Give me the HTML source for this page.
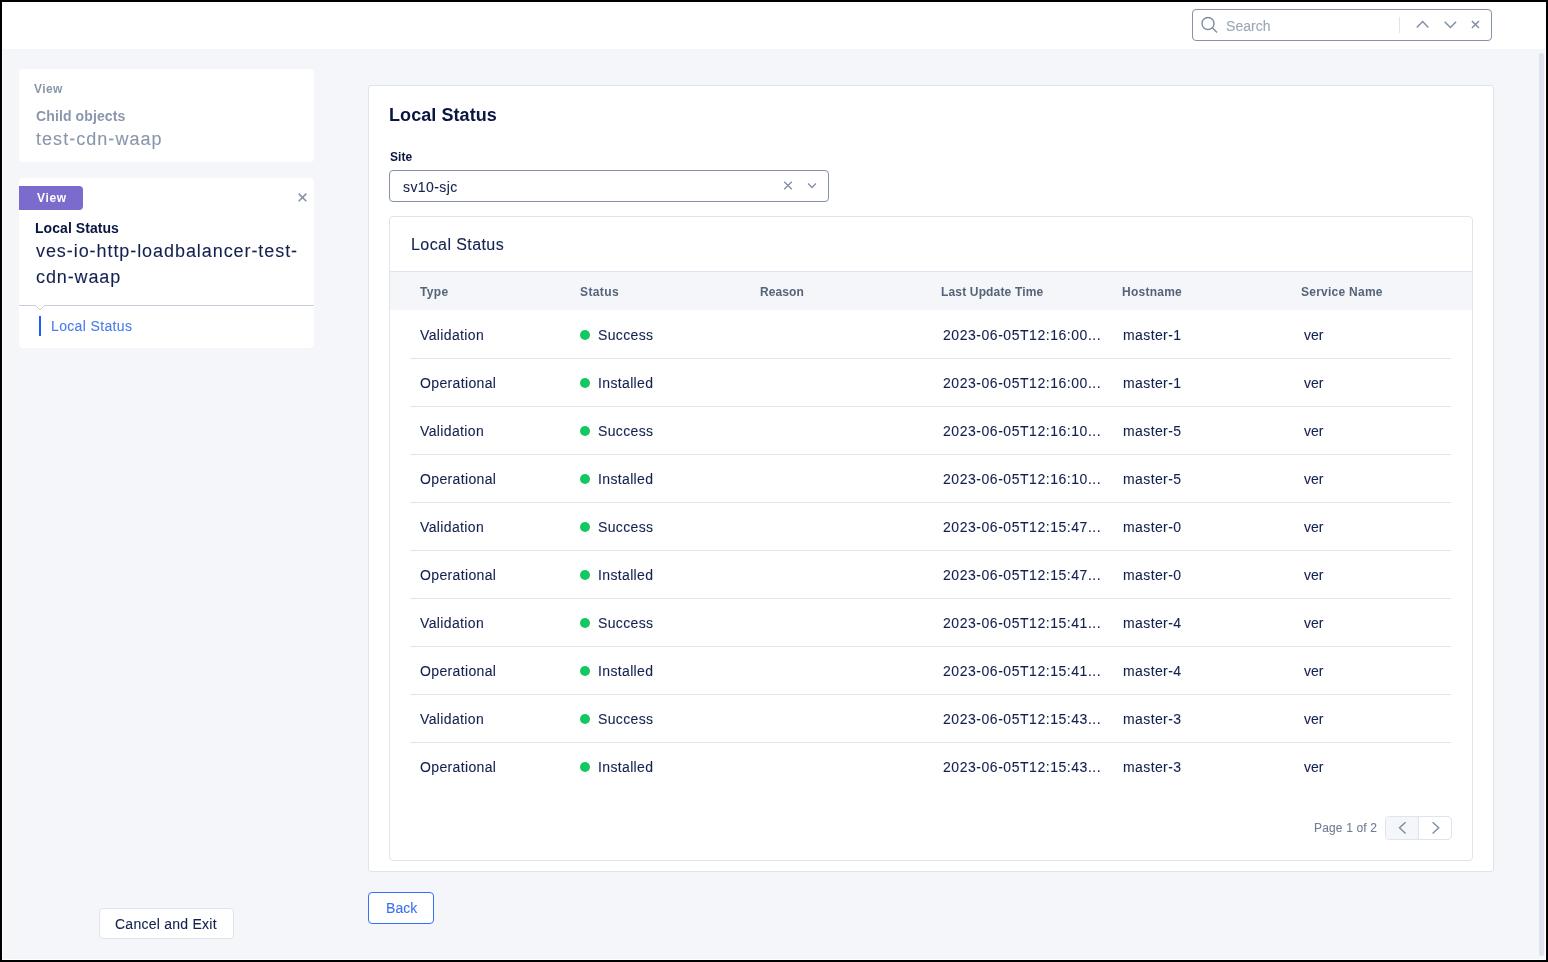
<!DOCTYPE html>
<html><head><meta charset="utf-8">
<style>
html,body{margin:0;padding:0;}
body{width:1548px;height:962px;background:#000;position:relative;overflow:hidden;font-family:"Liberation Sans",sans-serif;}
.win{position:absolute;left:2px;top:2px;width:1544px;height:958px;background:#fff;overflow:hidden;}
.t{position:absolute;line-height:1;white-space:pre;will-change:transform;-webkit-text-stroke:0.1px currentColor;}
.t.b{-webkit-text-stroke:0;}
.abs{position:absolute;box-sizing:border-box;}
svg{position:absolute;overflow:visible;}
</style></head><body>
<div class="win"></div>
<div class="abs" style="left:3px;top:49px;width:1542px;height:910px;background:#f4f6f9;"></div>
<div class="abs" style="left:1539px;top:53px;width:5px;height:903px;background:#dde2ee;border-radius:3px;"></div>
<div class="abs" style="left:1192px;top:9px;width:300px;height:32px;border:1px solid #8592a8;border-radius:4px;background:#fff;"></div>
<svg style="left:0;top:0" width="1548" height="60"><g fill="none" stroke="#7f8ca3" stroke-width="1.4"><circle cx="1208" cy="23.5" r="6"/><path d="M1212.3 27.8 L1217 32.5"/><path d="M1416.8 27.6 L1422.6 21.6 L1428.4 27.6"/><path d="M1444.7 21.8 L1450.4 27.6 L1456.1 21.8"/><path d="M1471.9 21 L1479 28.1 M1479 21 L1471.9 28.1"/></g><rect x="1399" y="17" width="1" height="16" fill="#dfe4ec"/></svg>
<div class="t" style="left:1226.0px;top:18.95px;font-size:14px;color:#9ba6b8;letter-spacing:0.05px;">Search</div>
<div class="abs" style="left:19px;top:69px;width:295px;height:93px;background:#fff;border-radius:4px;"></div>
<div class="t b" style="left:34.0px;top:82.94px;font-size:12px;color:#8996ab;font-weight:bold;letter-spacing:0.42px;">View</div>
<div class="t b" style="left:35.7px;top:109.15px;font-size:14px;color:#8996ab;font-weight:bold;letter-spacing:0.12px;">Child objects</div>
<div class="t" style="left:35.7px;top:129.56px;font-size:18px;color:#8996ab;letter-spacing:1.04px;">test-cdn-waap</div>
<div class="abs" style="left:19px;top:178px;width:295px;height:170px;background:#fff;border-radius:4px;"></div>
<div class="abs" style="left:19px;top:186px;width:64px;height:24px;background:#7b6bcd;border-radius:0 4px 4px 0;"></div>
<div class="t b" style="left:36.7px;top:191.84px;font-size:12px;color:#fff;font-weight:bold;letter-spacing:0.69px;">View</div>
<svg style="left:0;top:0" width="400" height="400"><g fill="none" stroke="#8390a6" stroke-width="1.5"><path d="M298.7 193.6 L306.3 201.2 M306.3 193.6 L298.7 201.2"/></g><path d="M19 305.5 L35.5 305.5 L40 310 L44.5 305.5 L314 305.5" fill="#fff" stroke="#c7cfdd" stroke-width="1"/><rect x="39" y="316" width="2" height="20" fill="#1f5bf5"/></svg>
<div class="t b" style="left:35.3px;top:221.45px;font-size:14px;color:#0a1642;font-weight:bold;letter-spacing:0.06px;">Local Status</div>
<div class="t" style="left:36.0px;top:241.96px;font-size:18px;color:#13214f;letter-spacing:0.93px;">ves-io-http-loadbalancer-test-</div>
<div class="t" style="left:36.0px;top:267.66px;font-size:18px;color:#13214f;letter-spacing:0.89px;">cdn-waap</div>
<div class="t" style="left:51.3px;top:319.15px;font-size:14px;color:#4b7bec;letter-spacing:0.35px;">Local Status</div>
<div class="abs" style="left:368px;top:85px;width:1126px;height:787px;background:#fff;border:1px solid #dde3ef;border-radius:3px;"></div>
<div class="t b" style="left:389.3px;top:105.56px;font-size:18px;color:#0a1642;font-weight:bold;letter-spacing:0.07px;">Local Status</div>
<div class="t b" style="left:389.5px;top:150.94px;font-size:12px;color:#0a1642;font-weight:bold;letter-spacing:0.06px;">Site</div>
<div class="abs" style="left:389px;top:170px;width:440px;height:32px;border:1px solid #8592a8;border-radius:4px;background:#fff;"></div>
<div class="t" style="left:402.6px;top:180.15px;font-size:14px;color:#13214f;letter-spacing:0.41px;">sv10-sjc</div>
<svg style="left:0;top:0" width="900" height="220"><g fill="none" stroke="#8390a6" stroke-width="1.4"><path d="M784.2 181.7 L791.8 189.3 M791.8 181.7 L784.2 189.3"/><path d="M808 183.5 L812 187.5 L816 183.5"/></g></svg>
<div class="abs" style="left:389px;top:216px;width:1084px;height:645px;background:#fff;border:1px solid #dde3ef;border-radius:4px;overflow:hidden;"><div class="abs" style="left:0;top:54px;width:1082px;height:39px;background:#f4f6f9;border-top:1px solid #dde3ef;"></div></div>
<div class="t" style="left:410.5px;top:237.26px;font-size:16px;color:#13214f;letter-spacing:0.42px;">Local Status</div>
<div class="t b" style="left:419.8px;top:286.14px;font-size:12px;color:#566479;font-weight:bold;letter-spacing:0.35px;">Type</div>
<div class="t b" style="left:579.8px;top:286.14px;font-size:12px;color:#566479;font-weight:bold;letter-spacing:0.40px;">Status</div>
<div class="t b" style="left:760.0px;top:286.14px;font-size:12px;color:#566479;font-weight:bold;letter-spacing:0.10px;">Reason</div>
<div class="t b" style="left:941.4px;top:286.14px;font-size:12px;color:#566479;font-weight:bold;letter-spacing:0.16px;">Last Update Time</div>
<div class="t b" style="left:1121.6px;top:286.14px;font-size:12px;color:#566479;font-weight:bold;letter-spacing:0.25px;">Hostname</div>
<div class="t b" style="left:1301.0px;top:286.14px;font-size:12px;color:#566479;font-weight:bold;letter-spacing:0.25px;">Service Name</div>
<div class="t" style="left:419.8px;top:328.15px;font-size:14px;color:#13214f;letter-spacing:0.36px;">Validation</div>
<div class="t" style="left:597.7px;top:328.15px;font-size:14px;color:#13214f;letter-spacing:0.36px;">Success</div>
<div class="t" style="left:943.0px;top:328.15px;font-size:14px;color:#13214f;letter-spacing:0.54px;">2023-06-05T12:16:00...</div>
<div class="t" style="left:1122.7px;top:328.15px;font-size:14px;color:#13214f;letter-spacing:0.40px;">master-1</div>
<div class="t" style="left:1304.2px;top:328.15px;font-size:14px;color:#13214f;letter-spacing:0.02px;">ver</div>
<div class="t" style="left:419.8px;top:376.15px;font-size:14px;color:#13214f;letter-spacing:0.36px;">Operational</div>
<div class="t" style="left:597.7px;top:376.15px;font-size:14px;color:#13214f;letter-spacing:0.36px;">Installed</div>
<div class="t" style="left:943.0px;top:376.15px;font-size:14px;color:#13214f;letter-spacing:0.54px;">2023-06-05T12:16:00...</div>
<div class="t" style="left:1122.7px;top:376.15px;font-size:14px;color:#13214f;letter-spacing:0.40px;">master-1</div>
<div class="t" style="left:1304.2px;top:376.15px;font-size:14px;color:#13214f;letter-spacing:0.02px;">ver</div>
<div class="t" style="left:419.8px;top:424.15px;font-size:14px;color:#13214f;letter-spacing:0.36px;">Validation</div>
<div class="t" style="left:597.7px;top:424.15px;font-size:14px;color:#13214f;letter-spacing:0.36px;">Success</div>
<div class="t" style="left:943.0px;top:424.15px;font-size:14px;color:#13214f;letter-spacing:0.54px;">2023-06-05T12:16:10...</div>
<div class="t" style="left:1122.7px;top:424.15px;font-size:14px;color:#13214f;letter-spacing:0.40px;">master-5</div>
<div class="t" style="left:1304.2px;top:424.15px;font-size:14px;color:#13214f;letter-spacing:0.02px;">ver</div>
<div class="t" style="left:419.8px;top:472.15px;font-size:14px;color:#13214f;letter-spacing:0.36px;">Operational</div>
<div class="t" style="left:597.7px;top:472.15px;font-size:14px;color:#13214f;letter-spacing:0.36px;">Installed</div>
<div class="t" style="left:943.0px;top:472.15px;font-size:14px;color:#13214f;letter-spacing:0.54px;">2023-06-05T12:16:10...</div>
<div class="t" style="left:1122.7px;top:472.15px;font-size:14px;color:#13214f;letter-spacing:0.40px;">master-5</div>
<div class="t" style="left:1304.2px;top:472.15px;font-size:14px;color:#13214f;letter-spacing:0.02px;">ver</div>
<div class="t" style="left:419.8px;top:520.15px;font-size:14px;color:#13214f;letter-spacing:0.36px;">Validation</div>
<div class="t" style="left:597.7px;top:520.15px;font-size:14px;color:#13214f;letter-spacing:0.36px;">Success</div>
<div class="t" style="left:943.0px;top:520.15px;font-size:14px;color:#13214f;letter-spacing:0.54px;">2023-06-05T12:15:47...</div>
<div class="t" style="left:1122.7px;top:520.15px;font-size:14px;color:#13214f;letter-spacing:0.40px;">master-0</div>
<div class="t" style="left:1304.2px;top:520.15px;font-size:14px;color:#13214f;letter-spacing:0.02px;">ver</div>
<div class="t" style="left:419.8px;top:568.15px;font-size:14px;color:#13214f;letter-spacing:0.36px;">Operational</div>
<div class="t" style="left:597.7px;top:568.15px;font-size:14px;color:#13214f;letter-spacing:0.36px;">Installed</div>
<div class="t" style="left:943.0px;top:568.15px;font-size:14px;color:#13214f;letter-spacing:0.54px;">2023-06-05T12:15:47...</div>
<div class="t" style="left:1122.7px;top:568.15px;font-size:14px;color:#13214f;letter-spacing:0.40px;">master-0</div>
<div class="t" style="left:1304.2px;top:568.15px;font-size:14px;color:#13214f;letter-spacing:0.02px;">ver</div>
<div class="t" style="left:419.8px;top:616.15px;font-size:14px;color:#13214f;letter-spacing:0.36px;">Validation</div>
<div class="t" style="left:597.7px;top:616.15px;font-size:14px;color:#13214f;letter-spacing:0.36px;">Success</div>
<div class="t" style="left:943.0px;top:616.15px;font-size:14px;color:#13214f;letter-spacing:0.54px;">2023-06-05T12:15:41...</div>
<div class="t" style="left:1122.7px;top:616.15px;font-size:14px;color:#13214f;letter-spacing:0.40px;">master-4</div>
<div class="t" style="left:1304.2px;top:616.15px;font-size:14px;color:#13214f;letter-spacing:0.02px;">ver</div>
<div class="t" style="left:419.8px;top:664.15px;font-size:14px;color:#13214f;letter-spacing:0.36px;">Operational</div>
<div class="t" style="left:597.7px;top:664.15px;font-size:14px;color:#13214f;letter-spacing:0.36px;">Installed</div>
<div class="t" style="left:943.0px;top:664.15px;font-size:14px;color:#13214f;letter-spacing:0.54px;">2023-06-05T12:15:41...</div>
<div class="t" style="left:1122.7px;top:664.15px;font-size:14px;color:#13214f;letter-spacing:0.40px;">master-4</div>
<div class="t" style="left:1304.2px;top:664.15px;font-size:14px;color:#13214f;letter-spacing:0.02px;">ver</div>
<div class="t" style="left:419.8px;top:712.15px;font-size:14px;color:#13214f;letter-spacing:0.36px;">Validation</div>
<div class="t" style="left:597.7px;top:712.15px;font-size:14px;color:#13214f;letter-spacing:0.36px;">Success</div>
<div class="t" style="left:943.0px;top:712.15px;font-size:14px;color:#13214f;letter-spacing:0.54px;">2023-06-05T12:15:43...</div>
<div class="t" style="left:1122.7px;top:712.15px;font-size:14px;color:#13214f;letter-spacing:0.40px;">master-3</div>
<div class="t" style="left:1304.2px;top:712.15px;font-size:14px;color:#13214f;letter-spacing:0.02px;">ver</div>
<div class="t" style="left:419.8px;top:760.15px;font-size:14px;color:#13214f;letter-spacing:0.36px;">Operational</div>
<div class="t" style="left:597.7px;top:760.15px;font-size:14px;color:#13214f;letter-spacing:0.36px;">Installed</div>
<div class="t" style="left:943.0px;top:760.15px;font-size:14px;color:#13214f;letter-spacing:0.54px;">2023-06-05T12:15:43...</div>
<div class="t" style="left:1122.7px;top:760.15px;font-size:14px;color:#13214f;letter-spacing:0.40px;">master-3</div>
<div class="t" style="left:1304.2px;top:760.15px;font-size:14px;color:#13214f;letter-spacing:0.02px;">ver</div>
<svg style="left:0;top:0" width="1548" height="962"><circle cx="585" cy="335" r="5" fill="#12c862"/><rect x="410" y="358" width="1041" height="1" fill="#dde3ef"/><circle cx="585" cy="383" r="5" fill="#12c862"/><rect x="410" y="406" width="1041" height="1" fill="#dde3ef"/><circle cx="585" cy="431" r="5" fill="#12c862"/><rect x="410" y="454" width="1041" height="1" fill="#dde3ef"/><circle cx="585" cy="479" r="5" fill="#12c862"/><rect x="410" y="502" width="1041" height="1" fill="#dde3ef"/><circle cx="585" cy="527" r="5" fill="#12c862"/><rect x="410" y="550" width="1041" height="1" fill="#dde3ef"/><circle cx="585" cy="575" r="5" fill="#12c862"/><rect x="410" y="598" width="1041" height="1" fill="#dde3ef"/><circle cx="585" cy="623" r="5" fill="#12c862"/><rect x="410" y="646" width="1041" height="1" fill="#dde3ef"/><circle cx="585" cy="671" r="5" fill="#12c862"/><rect x="410" y="694" width="1041" height="1" fill="#dde3ef"/><circle cx="585" cy="719" r="5" fill="#12c862"/><rect x="410" y="742" width="1041" height="1" fill="#dde3ef"/><circle cx="585" cy="767" r="5" fill="#12c862"/></svg>
<div class="t" style="left:1313.8px;top:821.94px;font-size:12px;color:#707e95;letter-spacing:0.16px;">Page 1 of 2</div>
<div class="abs" style="left:1385px;top:816px;width:67px;height:24px;border:1px solid #dde3ef;border-radius:4px;background:#fff;overflow:hidden;"><div class="abs" style="left:0;top:0;width:33px;height:22px;background:#f4f6f9;border-right:1px solid #dde3ef;"></div></div>
<svg style="left:0;top:0" width="1548" height="962"><g fill="none" stroke="#7f8ca3" stroke-width="1.4"><path d="M1405.6 822.2 L1399.5 827.8 L1405.6 833.4"/><path d="M1432.6 822.2 L1438.7 827.8 L1432.6 833.4"/></g></svg>
<div class="abs" style="left:368px;top:892px;width:66px;height:32px;border:1px solid #3570f2;border-radius:4px;background:#fff;"></div>
<div class="t" style="left:385.7px;top:901.15px;font-size:14px;color:#3d70ef;letter-spacing:0.06px;">Back</div>
<div class="abs" style="left:99px;top:908px;width:135px;height:31px;border:1px solid #dde3ef;border-radius:4px;background:#fff;"></div>
<div class="t" style="left:115.3px;top:917.15px;font-size:14px;color:#13214f;letter-spacing:0.25px;">Cancel and Exit</div>
</body></html>
